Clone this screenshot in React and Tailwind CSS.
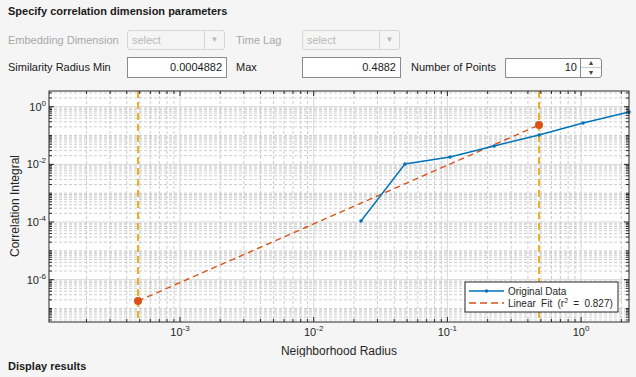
import React from "react";

// axes geometry in page pixels
const L = 49, R = 629, T = 92, B = 323;
const X = (l) => 180 + (l + 3) * 133.7;
const Y = (l) => 107.7 - l * 28.83;

const xMajor = [-3, -2, -1, 0];
const xMinor = [];
for (let d = -4; d <= 0; d++) {
  for (let k = 2; k <= 9; k++) {
    const x = X(d + Math.log10(k));
    if (x > L + 0.5 && x < R - 0.5) xMinor.push(x);
  }
}
const yMajor = [0, -2, -4, -6];
const yMinor = [];
for (let d = -8; d <= 0; d++) {
  for (let k = 1; k <= 9; k++) {
    if (k === 1 && d % 2 === 0) continue;
    const y = Y(d + Math.log10(k));
    if (y > T + 0.5 && y < B - 0.5) yMinor.push(y);
  }
}

const data = [
  [361, 222], [405, 165], [450, 158], [494, 147], [539, 136], [583, 124], [629, 113],
];

function Dropdown() {
  return (
    <div className="flex h-[20px] w-[98px] rounded-[3px] border border-[#d6d6d6]">
      <div className="flex flex-1 items-center pl-[4px] text-[#b8b8b8]">select</div>
      <div className="flex w-[20px] items-center justify-center border-l border-[#d6d6d6] text-[8px] text-[#b8b8b8]">▼</div>
    </div>
  );
}

function NumBox({ value, w }) {
  return (
    <div className={`flex h-[21px] ${w} items-center justify-end border border-[#8a8a8a] bg-white pr-[4px] text-[#1a1a1a]`}>
      {value}
    </div>
  );
}

function Plot() {
  return (
    <svg width="636" height="273" className="block" style={{ fontFamily: '"Liberation Sans", Arial, sans-serif' }}>
      <g transform="translate(0,-85)">
        <rect x={L} y={T} width={R - L} height={B - T} fill="#fff" />
        {/* minor grid */}
        {xMinor.map((x, i) => (
          <line key={"xm" + i} x1={x} x2={x} y1={T} y2={B} stroke="#c2c2c2" strokeWidth="0.8" strokeDasharray="3,2" />
        ))}
        {yMinor.map((y, i) => (
          <line key={"ym" + i} x1={L} x2={R} y1={y} y2={y} stroke="#c2c2c2" strokeWidth="0.8" strokeDasharray="3,2" />
        ))}
        {/* major grid */}
        {xMajor.map((l) => (
          <line key={"xM" + l} x1={X(l)} x2={X(l)} y1={T} y2={B} stroke="#d8d8d8" strokeWidth="1" />
        ))}
        {yMajor.map((l) => (
          <line key={"yM" + l} x1={L} x2={R} y1={Y(l)} y2={Y(l)} stroke="#d8d8d8" strokeWidth="1" />
        ))}

        {/* limits */}
        <line x1="138" x2="138" y1={T} y2={B} stroke="#EDB120" strokeWidth="2" strokeDasharray="7,4" />
        <line x1="539" x2="539" y1={T} y2={B} stroke="#EDB120" strokeWidth="2" strokeDasharray="7,4" />

        {/* fit */}
        <line x1="138" y1="302" x2="539" y2="126" stroke="#D95319" strokeWidth="1.4" strokeDasharray="6,4" />
        <circle cx="138" cy="302" r="4" fill="#D95319" />
        <circle cx="539" cy="126" r="4" fill="#D95319" />

        {/* data */}
        <polyline points={data.map((p) => p.join(",")).join(" ")} fill="none" stroke="#0072BD" strokeWidth="1.4" />
        {data.map(([x, y], i) => (
          <circle key={"d" + i} cx={x} cy={y} r="1.8" fill="#0072BD" />
        ))}

        {/* box and ticks */}
        <rect x={L} y={T} width={R - L} height={B - T} fill="none" stroke="#262626" strokeWidth="1" />
        {xMajor.map((l) => (
          <g key={"xt" + l} stroke="#262626" strokeWidth="1">
            <line x1={X(l)} x2={X(l)} y1={B} y2={B - 5} />
            <line x1={X(l)} x2={X(l)} y1={T} y2={T + 5} />
          </g>
        ))}
        {xMinor.map((x, i) => (
          <g key={"xmt" + i} stroke="#262626" strokeWidth="1">
            <line x1={x} x2={x} y1={B} y2={B - 3} />
            <line x1={x} x2={x} y1={T} y2={T + 3} />
          </g>
        ))}
        {yMajor.map((l) => (
          <g key={"yt" + l} stroke="#262626" strokeWidth="1">
            <line x1={L} x2={L + 5} y1={Y(l)} y2={Y(l)} />
            <line x1={R} x2={R - 5} y1={Y(l)} y2={Y(l)} />
          </g>
        ))}
        {yMinor.map((y, i) => (
          <g key={"ymt" + i} stroke="#262626" strokeWidth="1">
            <line x1={L} x2={L + 3} y1={y} y2={y} />
            <line x1={R} x2={R - 3} y1={y} y2={y} />
          </g>
        ))}

        {/* tick labels */}
        {xMajor.map((l) => (
          <text key={"xl" + l} x={X(l)} y="337" textAnchor="middle" fontSize="11" fill="#262626">
            10<tspan dy="-5" fontSize="8">{l === 0 ? "0" : String(l)}</tspan>
          </text>
        ))}
        {yMajor.map((l) => (
          <text key={"yl" + l} x="46" y={Y(l) + 4} textAnchor="end" fontSize="11" fill="#262626">
            10<tspan dy="-5" fontSize="8">{l === 0 ? "0" : String(l)}</tspan>
          </text>
        ))}

        {/* axis labels */}
        <text x="339" y="356" textAnchor="middle" fontSize="12" fill="#262626">Neighborhood Radius</text>
        <text x="16" y="207" transform="rotate(-90 16 207)" textAnchor="middle" dominantBaseline="middle" fontSize="12" fill="#262626">
          Correlation Integral
        </text>

        {/* legend */}
        <rect x="465" y="283" width="153" height="30" fill="#fff" stroke="#262626" strokeWidth="1" />
        <line x1="469" x2="504" y1="292" y2="292" stroke="#0072BD" strokeWidth="1.4" />
        <circle cx="486.5" cy="292" r="1.8" fill="#0072BD" />
        <text x="508" y="295.5" fontSize="10" fill="#262626">Original Data</text>
        <line x1="469" x2="504" y1="304" y2="304" stroke="#D95319" strokeWidth="1.4" strokeDasharray="7,4" />
        <text x="508" y="307.5" fontSize="10" fill="#262626" wordSpacing="2.5">
          Linear Fit (r<tspan dy="-4" fontSize="7">2</tspan><tspan dy="4"> = 0.827)</tspan>
        </text>
      </g>
    </svg>
  );
}

export default function App() {
  return (
    <div className="h-[377px] w-[636px] overflow-hidden bg-[#f5f5f5] text-[11px] text-[#1a1a1a]" style={{ fontFamily: '"Liberation Sans", Arial, sans-serif' }}>
      <div className="px-2">
        <div className="flex h-[23px] items-center text-[11px] font-bold">Specify correlation dimension parameters</div>

        <div className="mt-[7px] flex h-[20px] items-center">
          <span className="w-[119px] text-[#a8a8a8]">Embedding Dimension</span>
          <Dropdown />
          <span className="ml-[11px] w-[66px] text-[#a8a8a8]">Time Lag</span>
          <Dropdown />
        </div>

        <div className="mt-[7px] flex h-[21px] items-center">
          <span className="w-[119px]">Similarity Radius Min</span>
          <NumBox value="0.0004882" w="w-[100px]" />
          <span className="ml-[9px] w-[66px]">Max</span>
          <NumBox value="0.4882" w="w-[99px]" />
          <span className="ml-[10px] w-[94px]">Number of Points</span>
          <div className="flex h-[20px] w-[97px] rounded-r-[3px] border border-[#8a8a8a] bg-white">
            <div className="flex flex-1 items-center justify-end pr-[3px]">10</div>
            <div className="flex w-[21px] flex-col border-l border-[#8a8a8a] text-[7px] leading-none text-[#444]">
              <div className="flex flex-1 items-center justify-center border-b border-[#c8c8c8]">▲</div>
              <div className="flex flex-1 items-center justify-center">▼</div>
            </div>
          </div>
        </div>
      </div>

      <div className="mt-[6px]">
        <Plot />
      </div>

      <div className="flex h-[19px] items-center px-2 text-[11px] font-bold">Display results</div>
    </div>
  );
}
